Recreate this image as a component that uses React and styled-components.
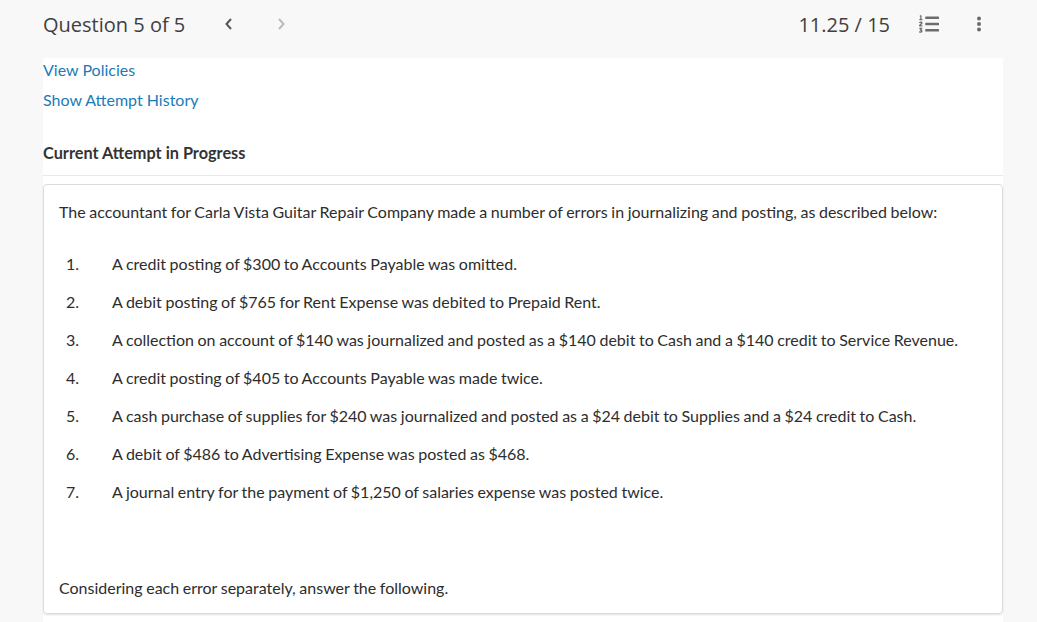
import React from "react";
import styled, { createGlobalStyle } from "styled-components";
import { FaListOl } from "react-icons/fa";

const GlobalStyle = createGlobalStyle`
  body {
    margin: 0;
    background: #f8f8f8;
    font-family: Lato, "Open Sans", sans-serif;
    color: #333;
  }
`;

const Page = styled.div`
  width: 1037px;
  min-height: 622px;
  background: #f8f8f8;
`;

const Header = styled.header`
  height: 48px;
  display: flex;
  align-items: center;
  padding: 0 55px 0 43px;
  font-family: "Open Sans", sans-serif;
  color: #404040;
`;

const Title = styled.div`
  font-size: 20px;
  margin-right: 34px;
`;

const NavButton = styled.button`
  display: flex;
  align-items: center;
  justify-content: center;
  width: 20px;
  height: 30px;
  margin-right: 32px;
  padding: 0;
  border: none;
  background: none;
  color: ${(p) => (p.disabled ? "#bbb" : "#555")};
`;

const Spacer = styled.div`
  flex: 1;
`;

const Score = styled.div`
  font-size: 20px;
  margin-right: 29px;
`;

const IconButton = styled.div`
  display: flex;
  align-items: center;
  color: #6b6b6b;
  margin-right: ${(p) => p.gap || 0}px;
`;

const Main = styled.main`
  width: 960px;
  margin: 10px 0 0 43px;
  background: #fff;
  padding-bottom: 9px;
`;

const Links = styled.div`
  display: flex;
  flex-direction: column;
  gap: 6px;
`;

const Link = styled.a`
  font-size: 16px;
  line-height: 24px;
  color: #1a7bb9;
  text-decoration: none;
`;

const SectionTitle = styled.h2`
  margin: 29px 0 0;
  padding-bottom: 10px;
  font-size: 16.3px;
  line-height: 24px;
  font-weight: 700;
  color: #333;
  border-bottom: 1px solid #e9e9e9;
`;

const Card = styled.div`
  margin-top: 8px;
  border: 1px solid #dcdcdc;
  border-radius: 4px;
  box-shadow: 0 1px 2px rgba(0, 0, 0, 0.12);
  padding: 16px 15px 14px;
  font-size: 16px;
  line-height: 22px;
  word-spacing: -0.5px;
  color: #2d2d2d;
`;

const Para = styled.p`
  margin: 0;
`;

const List = styled.ol`
  list-style: none;
  margin: 30px 0 74px;
  padding: 0;
  display: flex;
  flex-direction: column;
  gap: 16px;
`;

const Item = styled.li`
  display: grid;
  grid-template-columns: 53px 1fr;
`;

const Num = styled.span`
  padding-left: 7px;
`;

const errors = [
  "A credit posting of $300 to Accounts Payable was omitted.",
  "A debit posting of $765 for Rent Expense was debited to Prepaid Rent.",
  "A collection on account of $140 was journalized and posted as a $140 debit to Cash and a $140 credit to Service Revenue.",
  "A credit posting of $405 to Accounts Payable was made twice.",
  "A cash purchase of supplies for $240 was journalized and posted as a $24 debit to Supplies and a $24 credit to Cash.",
  "A debit of $486 to Advertising Expense was posted as $468.",
  "A journal entry for the payment of $1,250 of salaries expense was posted twice.",
];

const Chevron = ({ left }) => (
  <svg width="10" height="14" viewBox="0 0 10 14">
    <polyline
      points={left ? "7,2 2.5,7 7,12" : "3,2 7.5,7 3,12"}
      fill="none"
      stroke="currentColor"
      strokeWidth="2"
    />
  </svg>
);

const Dots = () => (
  <svg width="6" height="16" viewBox="0 0 6 16">
    <circle cx="3" cy="2.5" r="2" fill="currentColor" />
    <circle cx="3" cy="8" r="2" fill="currentColor" />
    <circle cx="3" cy="13.5" r="2" fill="currentColor" />
  </svg>
);

export default function App() {
  return (
    <Page>
      <GlobalStyle />
      <Header>
        <Title>Question 5 of 5</Title>
        <NavButton aria-label="Previous">
          <Chevron left />
        </NavButton>
        <NavButton aria-label="Next" disabled>
          <Chevron />
        </NavButton>
        <Spacer />
        <Score>11.25 / 15</Score>
        <IconButton gap={37}>
          <FaListOl size={20} />
        </IconButton>
        <IconButton>
          <Dots />
        </IconButton>
      </Header>
      <Main>
        <Links>
          <Link href="#">View Policies</Link>
          <Link href="#">Show Attempt History</Link>
        </Links>
        <SectionTitle>Current Attempt in Progress</SectionTitle>
        <Card>
          <Para>
            The accountant for Carla Vista Guitar Repair Company made a number
            of errors in journalizing and posting, as described below:
          </Para>
          <List>
            {errors.map((e, i) => (
              <Item key={i}>
                <Num>{i + 1}.</Num>
                <span>{e}</span>
              </Item>
            ))}
          </List>
          <Para>Considering each error separately, answer the following.</Para>
        </Card>
      </Main>
    </Page>
  );
}
